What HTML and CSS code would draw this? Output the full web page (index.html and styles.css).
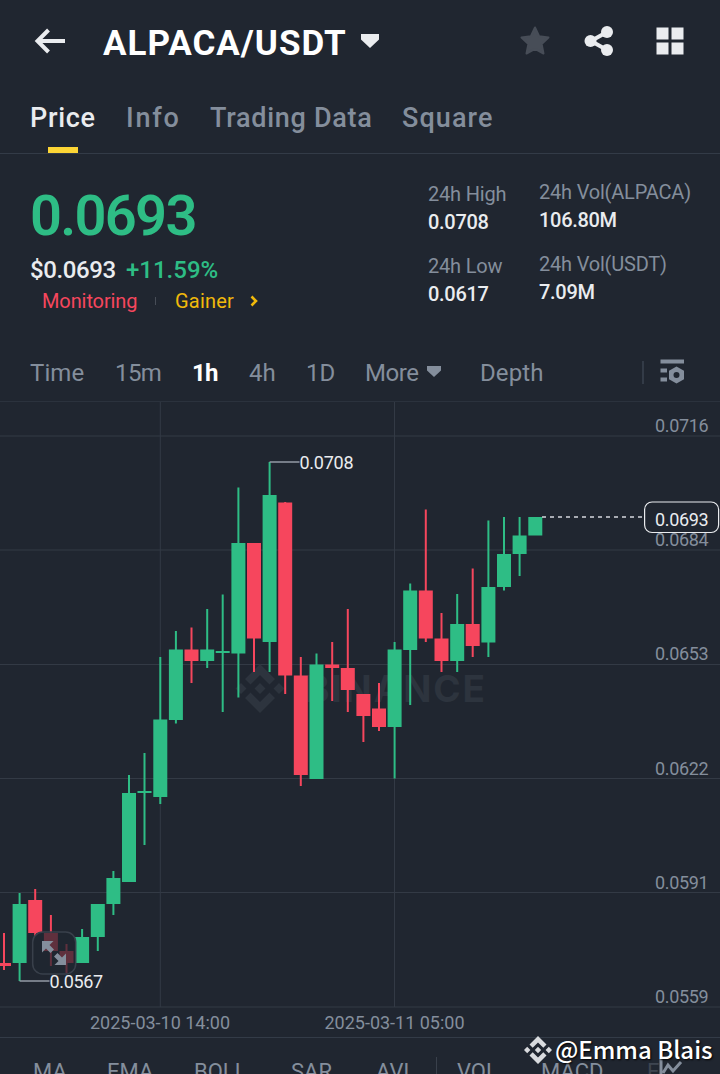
FILE: index.html
```
<!DOCTYPE html>
<html lang="en">
<head>
    <meta charset="UTF-8">
    <meta name="viewport" content="width=device-width, initial-scale=1.0">
    <title>ALPACA/USDT</title>
    <link rel="stylesheet" href="styles.css">
</head>
<body>
    <header class="topbar">
        <svg class="back" width="32" height="26" viewBox="0 0 32 26">
            <path d="M31 13H4M14.500 2L3.500 13l11 11" />
        </svg>
        <h1 class="pair">ALPACA/USDT</h1>
        <svg class="caret" width="18" height="15" viewBox="0 0 18 15"><path d="M0 0h18v5.500L9 14 0 5.500z" /></svg>
        <div class="actions">
            <svg width="32" height="32" viewBox="0 0 32 32">
                <path class="star" d="M16 2.500l4.100 8.700 9.400 1.200-6.900 6.500 1.900 9.600-8.500-4.600-8.500 4.600 1.900-9.600-6.900-6.500 9.400-1.200z" />
            </svg>
            <svg width="30" height="32" viewBox="0 0 30 32">
                <path class="share-line" d="M23 7L7 16l16 9" />
                <circle cx="23" cy="7" r="6" /><circle cx="6.500" cy="16" r="6" /><circle cx="23" cy="25" r="6" />
            </svg>
            <svg width="28" height="28" viewBox="0 0 28 28">
                <path d="M.500.500h12v12H.500zM15.500.500h12v12h-12zM.500 15.500h12v12H.500zM15.500 15.500h12v12h-12z" />
            </svg>
        </div>
    </header>

    <nav class="tabs">
        <a class="tab tab-price active">Price</a>
        <a class="tab tab-info">Info</a>
        <a class="tab tab-data">Trading Data</a>
        <a class="tab tab-square">Square</a>
    </nav>

    <section class="ticker">
        <div class="quote">
            <div class="last-price">0.0693</div>
            <div class="sub-price"><span class="usd">$0.0693</span><span class="change">+11.59%</span></div>
            <div class="tags">
                <span class="monitoring">Monitoring</span>
                <span class="tag-divider"></span>
                <span class="gainer">Gainer</span>
                <svg class="chevron" width="8" height="12" viewBox="0 0 8 12"><path d="M1.500 1.500L6 6l-4.500 4.500" /></svg>
            </div>
        </div>
        <div class="stats">
            <div class="stat-col stat-price">
                <div class="stat"><span class="label">24h High</span><span class="value">0.0708</span></div>
                <div class="stat"><span class="label">24h Low</span><span class="value">0.0617</span></div>
            </div>
            <div class="stat-col stat-volume">
                <div class="stat"><span class="label">24h Vol(ALPACA)</span><span class="value">106.80M</span></div>
                <div class="stat"><span class="label">24h Vol(USDT)</span><span class="value">7.09M</span></div>
            </div>
        </div>
    </section>

    <div class="timeframes">
        <span class="frame w54">Time</span>
        <span class="frame w46">15m</span>
        <span class="frame w26 selected">1h</span>
        <span class="frame w26">4h</span>
        <span class="frame w28">1D</span>
        <span class="frame more">More<svg width="14" height="11" viewBox="0 0 14 11"><path d="M0 0h14v4.500L7 11 0 4.500z" /></svg></span>
        <span class="frame">Depth</span>
        <div class="chart-settings">
            <svg width="25" height="25" viewBox="0 0 25 25">
                <path fill-rule="evenodd" d="M.500.500h23.500v4H.500zM.500 9.500H7v4H.500zM.500 18.500H7v4H.500zM16.500 7.500l7.500 4.300v8.400l-7.500 4.300-7.500-4.300v-8.400zM16.500 13a3 3 0 1 0 0 6 3 3 0 0 0 0-6z" />
            </svg>
        </div>
    </div>

    <main class="chart">
        <svg class="candles" width="720" height="635" viewBox="0 402 720 635">
            <path class="grid" d="M0 436H720M0 550H720M0 664.500H720M0 778.500H720M0 892.500H720M0 1007H720M160.300 402V1007M394.500 402V1007" />

            <g class="logo">
                <path d="M260 664l15 15-5.500 5.500-9.500-9.500-9.500 9.500-5.500-5.500zM260 713l15-15-5.500-5.500-9.500 9.500-9.500-9.500-5.500 5.500zM260 683l5.500 5.500-5.500 5.500-5.500-5.500zM241 683l5.500 5.500-5.500 5.500-5.500-5.500zM279 683l5.500 5.500-5.500 5.500-5.500-5.500z" />
                <text x="305" y="702" textLength="180">BINANCE</text>
            </g>

            <path class="up wick" d="M19.600 893V981M82.100 929V963M97.800 904V951M113.400 871V915M129 775V882M144.500 753V845M160.300 657V804M175.900 631V723.500M207.200 609V668M222.700 594.500V712M238.400 487.500V697.500M269.600 462V672M316.500 653.500V779M394.600 642V778.500M410.200 583.500V705M457.200 594V672M488.400 520.500V657M504 517V590.500M519.600 517V576" />
            <path class="up body" d="M19.600 904V963M82.100 937V963M97.800 904V937M113.400 878V904M129 793V882M144.500 791V793M160.300 719.500V797M175.900 649.500V720M207.200 649.500V661M222.700 651V653M238.400 543V653.500M269.600 495V642M316.500 664.500V779M394.600 649.500V727M410.200 590.500V650M457.200 624V661M488.400 587V642.500M504 554V587M519.600 535.500V554M535.300 517V535.500" />
            <path class="down wick" d="M4 933V970M35.200 889V936M50.900 915V966M66.500 944V973M191.500 627.500V683M254 543V672M285.200 502V694M300.800 657V786M332.200 642V701M347.800 609V712M363.400 694V742M379 683V731M425.800 509.500V642M441.500 613V672M472.700 568.500V657" />
            <path class="down body" d="M4 963V966M35.200 900V933M50.900 933V951M66.500 951V963M191.500 649.500V661M254 543V638.500M285.200 502.500V675.500M300.800 675.500V775M332.200 664.500V668M347.800 668V690M363.400 694V716M379 708.500V727M425.800 590.500V638.500M441.500 638.500V661M472.700 624V646" />

            <g class="expand">
                <rect x="32.700" y="932" width="43" height="42" rx="10" />
                <path d="M42 941h11.500l-4 4 4.500 4.500-3.500 3.500-4.500-4.500-4 4zM66 965H54.500l4-4-4.500-4.500 3.500-3.500 4.500 4.500 4-4z" />
            </g>

            <path class="leader" d="M269.600 462H299.500M19.600 981H49.500" />
            <text class="extreme" x="299.500" y="469" textLength="54">0.0708</text>
            <text class="extreme" x="49.500" y="988" textLength="53.500">0.0567</text>

            <g class="axis">
                <text x="655" y="432" textLength="53.500">0.0716</text>
                <text x="655" y="546" textLength="53.500">0.0684</text>
                <text x="655" y="660" textLength="53.500">0.0653</text>
                <text x="655" y="775" textLength="53.500">0.0622</text>
                <text x="655" y="889" textLength="53.500">0.0591</text>
                <text x="655" y="1003" textLength="53.500">0.0559</text>
                <text x="90" y="1029" textLength="140">2025-03-10 14:00</text>
                <text x="324.500" y="1029" textLength="140">2025-03-11 05:00</text>
            </g>

            <path class="current-line" d="M542 517H644" />
            <rect class="current-box" x="644.600" y="502" width="74" height="30.500" rx="7.500" />
            <text class="current" x="655" y="526" textLength="53.500">0.0693</text>
        </svg>
    </main>

    <footer class="indicators">
        <span class="ma">MA</span>
        <span class="ema">EMA</span>
        <span class="boll">BOLL</span>
        <span class="sar">SAR</span>
        <span class="avl">AVL</span>
        <span class="vol">VOL</span>
        <span class="macd">MACD</span>
        <span class="next">E</span>
        <svg width="24" height="24" viewBox="0 0 24 24"><path d="M2 0v19h20M4 14l5-8 5 6 8-9" /></svg>
    </footer>

    <div class="author">
        <svg width="28" height="28" viewBox="0 0 28 28">
            <path d="M14 0l8.500 8.500-3.200 3.200L14 6.400l-5.300 5.300-3.200-3.200zM14 28l8.500-8.500-3.200-3.200-5.300 5.300-5.300-5.300-3.200 3.200zM14 10.800l3.200 3.200-3.200 3.200-3.200-3.200zM3.200 10.800L6.400 14l-3.200 3.200L0 14zM24.800 10.800L28 14l-3.200 3.200-3.200-3.200z" />
        </svg>
        <span>@Emma Blais</span>
    </div>
</body>
</html>
```

FILE: styles.css
```
* {
    box-sizing: border-box;
}
body {
    position: relative;
    width: 720px;
    height: 1074px;
    margin: 0;
    overflow: hidden;
    background-color: #202630;
    color: #eaecef;
    font-family: Roboto, "Noto Sans", sans-serif;
}
svg {
    display: block;
    flex-shrink: 0;
    fill: #eaecef;
}

/* top bar */
.topbar {
    display: flex;
    align-items: center;
    height: 82px;
    padding: 0 36px 0 34px;
}
.back path {
    fill: none;
    stroke: #eaecef;
    stroke-width: 4;
}
.pair {
    width: 243px;
    margin: 5px 15px 0 37px;
    color: #fff;
    font-size: 35px;
    font-weight: 700;
    line-height: 40px;
    letter-spacing: 1px;
    white-space: nowrap;
}
.actions {
    display: flex;
    align-items: center;
    margin-left: auto;
}
.actions svg:nth-child(2) {
    margin: 0 42px 0 33px;
}
.actions .star {
    fill: #474d57;
    stroke: #474d57;
    stroke-width: 2;
    stroke-linejoin: round;
}
.share-line {
    fill: none;
    stroke: #eaecef;
    stroke-width: 4;
}

/* tabs */
.tabs {
    display: flex;
    gap: 31px;
    height: 72px;
    padding: 18px 30px 0;
    border-bottom: 1px solid #333b47;
}
.tab {
    height: 53px;
    color: #848e9c;
    font-size: 27px;
    font-weight: 500;
    line-height: 36px;
    letter-spacing: 0.7px;
    white-space: nowrap;
}
.tab-price {
    width: 65px;
}
.tab-info {
    width: 53px;
    letter-spacing: 1.8px;
}
.tab-data {
    width: 161px;
}
.tab-square {
    letter-spacing: 1.1px;
}
.tab.active {
    color: #eaecef;
}
.tab.active::after {
    content: "";
    display: block;
    width: 30px;
    height: 6px;
    margin: 11px auto 0;
    background-color: #fcd535;
}

/* ticker */
.ticker {
    display: flex;
    height: 189px;
    padding: 26px 30px 0;
}
.quote {
    flex-shrink: 0;
    width: 398px;
}
.last-price {
    color: #2ebd85;
    font-size: 56px;
    font-weight: 600;
    line-height: 73px;
    letter-spacing: -1.7px;
    white-space: nowrap;
}
.sub-price {
    display: flex;
    margin-top: 3px;
    font-size: 24px;
    font-weight: 500;
    line-height: 28px;
}
.usd {
    width: 96px;
    letter-spacing: -0.4px;
}
.change {
    color: #2ebd85;
}
.tags {
    display: flex;
    align-items: center;
    height: 28px;
    margin-top: 3px;
    padding-left: 12px;
    font-size: 20px;
    letter-spacing: 0.2px;
}
.monitoring {
    width: 95px;
    color: #f6465d;
    letter-spacing: -0.1px;
}
.tag-divider {
    width: 1px;
    height: 8px;
    margin: 0 19px 0 18px;
    background-color: #474d57;
}
.gainer {
    width: 60px;
    color: #f0b90b;
}
.chevron {
    margin-left: 15px;
    fill: none;
    stroke: #f0b90b;
    stroke-width: 2.6;
}
.stats {
    display: flex;
}
.stat-price {
    width: 111px;
    padding-top: 2px;
}
.stat {
    display: flex;
    flex-direction: column;
    height: 72px;
    white-space: nowrap;
}
.label {
    margin-top: -2px;
    color: #848e9c;
    font-size: 20px;
    line-height: 28px;
    letter-spacing: -0.2px;
}
.value {
    font-size: 20px;
    font-weight: 500;
    line-height: 27px;
    letter-spacing: -0.3px;
    margin-top: 1px;
}

/* timeframes */
.timeframes {
    display: flex;
    align-items: center;
    gap: 31px;
    height: 59px;
    padding: 0 35px 0 30px;
    color: #848e9c;
    font-size: 24px;
    letter-spacing: 0.1px;
    white-space: nowrap;
}
.selected {
    color: #fff;
    font-weight: 700;
    letter-spacing: -0.8px;
}
.w54 {
    width: 54px;
}
.w46 {
    width: 46px;
    letter-spacing: -0.6px;
}
.w26 {
    width: 26px;
}
.w28 {
    width: 28px;
}
.more {
    display: flex;
    align-items: center;
    justify-content: space-between;
    width: 76px;
    margin-right: 8px;
    letter-spacing: -0.4px;
}
.timeframes svg {
    margin-top: -2px;
    fill: #848e9c;
}
.chart-settings {
    margin-left: auto;
    padding-left: 16px;
    border-left: 2px solid #333b47;
}

/* chart */
.candles {
    font-size: 18px;
}
.chart {
    height: 636px;
    border-bottom: 1px solid #333b47;
    box-shadow: 0 -1px #2b323d;
}
.grid {
    fill: none;
    stroke: #333a45;
    stroke-width: 1;
}
.logo {
    fill: #2d343e;
    font-family: Inter, sans-serif;
    font-size: 37px;
    font-weight: 700;
}
.wick {
    stroke-width: 2;
}
.body {
    stroke-width: 14;
}
.up {
    stroke: #2ebd85;
}
.down {
    stroke: #f6465d;
}
.expand rect {
    fill: #202630;
    fill-opacity: 0.7;
    stroke: #39404b;
    stroke-width: 1.5;
}
.expand path {
    fill: #848e9c;
}
.leader {
    stroke: #929aa5;
    stroke-width: 1.5;
}
.extreme,
.current {
    fill: #eaecef;
}
.axis {
    fill: #848e9c;
}
.current-line {
    stroke: #d5d8dd;
    stroke-width: 1.3;
    stroke-dasharray: 4 4;
}
.current-box {
    fill: #202630;
    stroke: #eaecef;
    stroke-width: 1.2;
}

/* indicators */
.indicators {
    display: flex;
    height: 36px;
    padding: 19px 0 0 33px;
    overflow: hidden;
    color: #848e9c;
    font-size: 22px;
    line-height: 30px;
}
.indicators span {
    flex-shrink: 0;
}
.ma {
    width: 74px;
}
.ema {
    width: 87px;
}
.boll {
    width: 97px;
}
.sar {
    width: 85px;
}
.avl {
    width: 60px;
}
.vol {
    width: 105px;
    padding-left: 20px;
    border-left: 1px solid #39404b;
}
.macd {
    width: 106px;
}
.next {
    width: 12px;
    opacity: 0.3;
}
.indicators svg {
    margin: 2px 0 0;
    fill: none;
    stroke: #848e9c;
    stroke-width: 3;
}

/* author mark */
.author {
    position: absolute;
    top: 1032px;
    left: 524px;
    display: flex;
    align-items: center;
    gap: 3px;
    height: 36px;
    color: #fff;
    font-family: "Noto Sans CJK SC", sans-serif;
    font-size: 24px;
    font-weight: 500;
    white-space: nowrap;
    text-shadow: 1px 1px 2px #000;
}
.author span {
    margin-top: -3px;
}
.author svg {
    fill: #d9dbde;
}
```
